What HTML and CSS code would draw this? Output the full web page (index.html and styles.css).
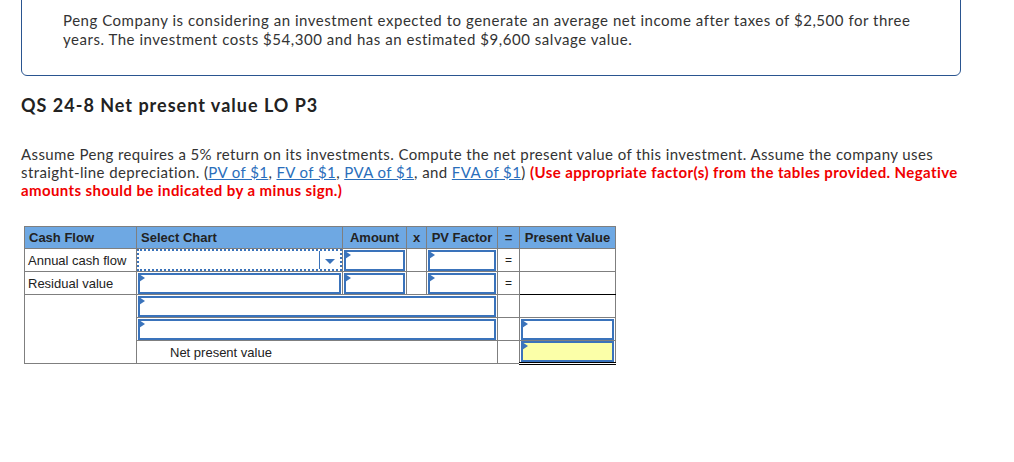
FILE: index.html
```html
<!DOCTYPE html>
<html>
<head>
<meta charset="utf-8">
<link rel="stylesheet" href="styles.css">
</head>
<body>
<div class="page">
  <div class="intro">
    <p>Peng Company is considering an investment expected to generate an average net income after taxes of $2,500 for three<br>years. The investment costs $54,300 and has an estimated $9,600 salvage value.</p>
  </div>
  <h2 class="title">QS 24-8 Net present value LO P3</h2>
  <p class="question">Assume Peng requires a 5% return on its investments. Compute the net present value of this investment. Assume the company uses<br>straight-line depreciation. (<a href="#">PV of $1</a>, <a href="#">FV of $1</a>, <a href="#">PVA of $1</a>, and <a href="#">FVA of $1</a>) <span class="warn">(Use appropriate factor(s) from the tables provided. Negative<br>amounts should be indicated by a minus sign.)</span></p>

  <table class="grid">
    <colgroup>
      <col class="c1"><col class="c2"><col class="c3"><col class="c4"><col class="c5"><col class="c6"><col class="c7">
    </colgroup>
    <tr class="head">
      <th class="left">Cash Flow</th>
      <th class="left">Select Chart</th>
      <th>Amount</th>
      <th>x</th>
      <th>PV Factor</th>
      <th>=</th>
      <th>Present Value</th>
    </tr>
    <tr>
      <td class="label">Annual cash flow</td>
      <td class="selcell"><div class="select"><span class="sel-arrow"></span></div></td>
      <td class="in"><div class="box"><span class="mark"></span></div></td>
      <td></td>
      <td class="in"><div class="box"><span class="mark"></span></div></td>
      <td class="eq">=</td>
      <td></td>
    </tr>
    <tr>
      <td class="label">Residual value</td>
      <td class="in"><div class="box"><span class="mark"></span></div></td>
      <td class="in"><div class="box"><span class="mark"></span></div></td>
      <td></td>
      <td class="in"><div class="box"><span class="mark"></span></div></td>
      <td class="eq">=</td>
      <td class="sumline"></td>
    </tr>
    <tr>
      <td rowspan="3"></td>
      <td colspan="4" class="in"><div class="box"><span class="mark"></span></div></td>
      <td></td>
      <td></td>
    </tr>
    <tr>
      <td colspan="4" class="in"><div class="box"><span class="mark"></span></div></td>
      <td></td>
      <td class="in"><div class="box"><span class="mark"></span></div></td>
    </tr>
    <tr>
      <td colspan="4" class="npv">Net present value</td>
      <td></td>
      <td class="in total"><div class="box yellow"><span class="mark"></span></div></td>
    </tr>
  </table>
</div>
</body>
</html>
```

FILE: styles.css
```css
html, body {
  margin: 0;
  padding: 0;
  background: #fff;
}
.page {
  padding-left: 21px;
  font-family: Lato, "Open Sans", sans-serif;
  color: #333;
}
.intro {
  width: 897px;
  margin-top: -20px;
  padding: 30px 0 26px 41px;
  border: 1px solid #2a5590;
  border-radius: 0 0 6px 6px;
}
.intro p {
  margin: 0;
  font-size: 15px;
  line-height: 19px;
  letter-spacing: 0.53px;
}
.title {
  margin: 19px 0 0;
  font-size: 18px;
  font-weight: 700;
  line-height: 20px;
  letter-spacing: 1px;
  color: #222;
}
.question {
  margin: 30px 0 0;
  font-size: 15px;
  line-height: 18px;
  letter-spacing: 0.4px;
}
.question a {
  color: #2a6ebb;
  text-decoration: underline;
}
.warn {
  color: #f00000;
  font-weight: 700;
}
.grid {
  margin: 27px 0 0 3px;
  border-collapse: collapse;
  table-layout: fixed;
  font-family: "Liberation Sans", Arial, sans-serif;
  font-size: 13px;
  color: #222;
}
.c1 { width: 112px; }
.c2 { width: 206px; }
.c3 { width: 64px; }
.c4 { width: 20px; }
.c5 { width: 71px; }
.c6 { width: 22px; }
.c7 { width: 96px; }
.grid th, .grid td {
  border: 1px solid #7f7f7f;
  padding: 0;
  height: 22px;
  box-sizing: border-box;
}
.grid tr { height: 23px; }
.grid .head { height: 22px; }
.grid th {
  background: #6ea8e3;
  font-weight: 700;
  text-align: center;
  color: #222;
}
.grid th.left {
  text-align: left;
  padding-left: 4px;
}
.grid td.label {
  padding-left: 3px;
  white-space: nowrap;
}
.grid td.eq {
  text-align: center;
  font-size: 12px;
}
.grid td.in {
  padding: 0 1px;
  vertical-align: middle;
}
.box {
  position: relative;
  height: 21px;
  box-sizing: border-box;
  border: 2px solid #3a73bb;
  background: #fff;
}
.box.yellow {
  background: #fbffa8;
}
.mark {
  position: absolute;
  left: -1px;
  top: -1px;
  width: 0;
  height: 0;
  border-top: 4px solid transparent;
  border-bottom: 4px solid transparent;
  border-left: 6px solid #3a73bb;
}
.selcell {
  padding: 0 !important;
}
.select {
  position: relative;
  height: 22px;
  box-sizing: border-box;
  border: 2px dotted #3a73bb;
}
.sel-arrow {
  position: absolute;
  right: 0;
  top: 0;
  width: 20px;
  height: 18px;
  border-left: 1px solid #3a73bb;
}
.sel-arrow::after {
  content: "";
  position: absolute;
  left: 5px;
  top: 8px;
  border-left: 5px solid transparent;
  border-right: 5px solid transparent;
  border-top: 5px solid #3a73bb;
}
.grid td.sumline {
  border-bottom: 1px solid #000;
}
.grid td.npv {
  padding-left: 33px;
}
.grid td.total {
  border-bottom: 3px double #000;
}
```
